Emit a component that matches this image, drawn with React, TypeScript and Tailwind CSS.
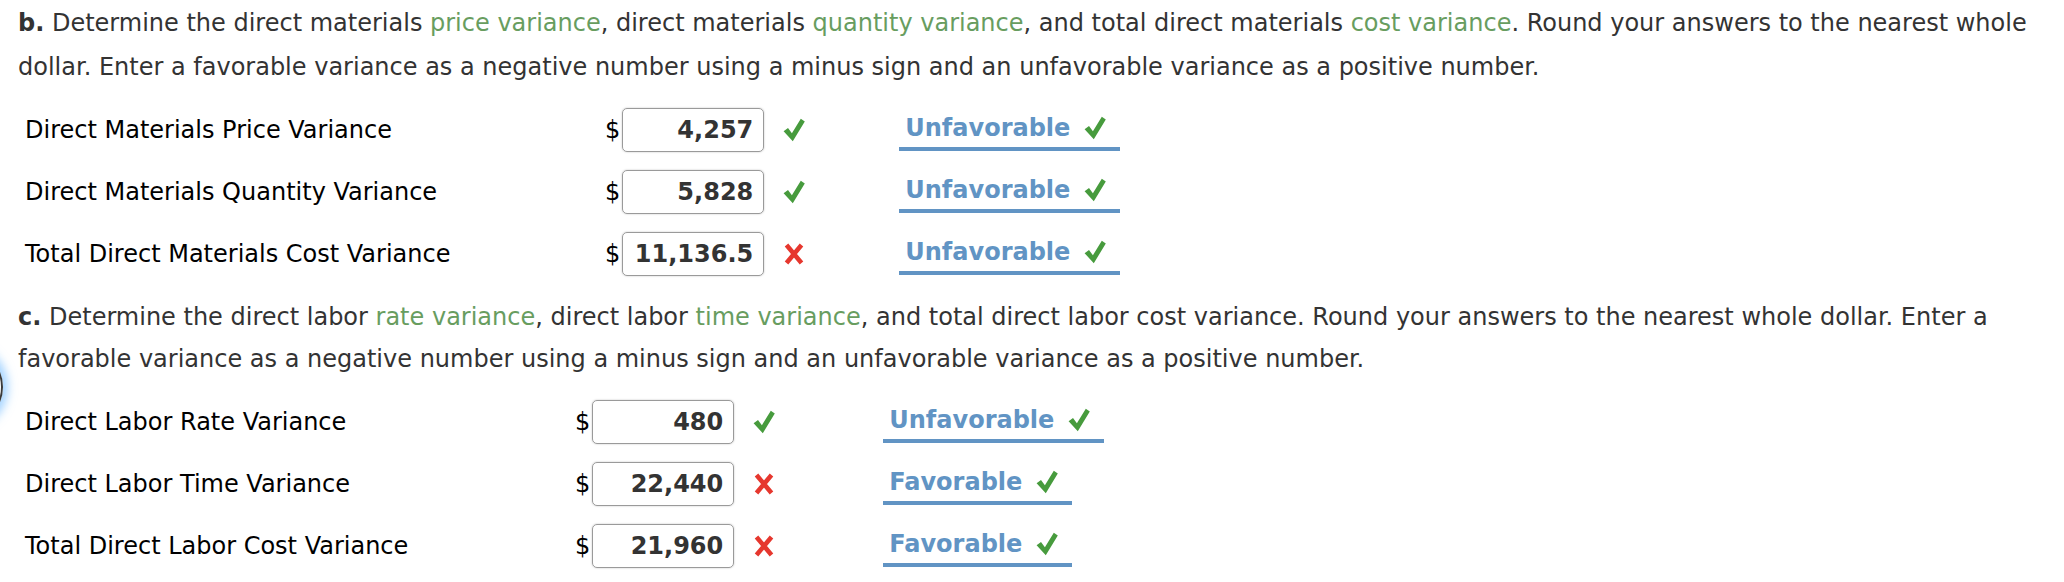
type Mark = "ok" | "bad";

interface RowProps {
  label: string;
  value: string;
  mark: Mark;
  choice: string;
  labelW: string;
  gapW: string;
}

function Check() {
  return (
    <svg width="22" height="24" viewBox="0 0 22 24" className="shrink-0">
      <path d="M0.6 13.2 L5 9.9 L8.9 15.2 L17.8 0.8 L21.8 3.6 L9.8 23.2 Z" fill="#479b3d" />
    </svg>
  );
}

function Cross() {
  return (
    <svg width="20" height="22" viewBox="0 0 20 22" className="shrink-0">
      <path d="M2.5 2 L17.5 20 M17.5 2 L2.5 20" stroke="#e6372e" strokeWidth="4.6" strokeLinecap="butt" />
    </svg>
  );
}

function Row({ label, value, mark, choice, labelW, gapW }: RowProps) {
  return (
    <div className="flex h-[62px] items-center pl-[25px]">
      <div className={`${labelW} shrink-0 text-black`}>{label}</div>
      <span className="text-black">$</span>
      <div className="ml-[2px] flex h-[44px] w-[142px] items-center justify-end rounded-[5px] border border-[#9a9a9a] pr-[10px] font-bold text-[#333] shadow-[0_0_2px_rgba(0,0,0,0.25)]">
        {value}
      </div>
      <div className="ml-[19px] flex w-[22px] justify-center">
        {mark === "ok" ? <Check /> : <Cross />}
      </div>
      <div
        className={`${gapW} inline-flex items-center border-b-4 border-[#6194c4] pb-[1px] pl-[6px] pr-[14px] font-bold text-[#6194c4]`}
      >
        <span>{choice}</span>
        <span className="ml-[14px]">
          <Check />
        </span>
      </div>
    </div>
  );
}

const green = "text-[#689d5f]";

export default function App() {
  return (
    <div className="relative h-[582px] w-[2064px] overflow-hidden bg-white font-['DejaVu_Sans',sans-serif] text-[24px] text-[#333]">
      {/* edge of a focused round button off to the left */}
      <div className="absolute left-[-75px] top-[348px] h-[78px] w-[78px] rounded-full border-2 border-[#3a3a3a] shadow-[0_0_10px_5px_rgba(90,175,255,0.55)]" />

      <p className="pl-[18px] pt-[1px] leading-[44px]">
        <b>b.</b> Determine the direct materials <span className={green}>price variance</span>, direct materials{" "}
        <span className={green}>quantity variance</span>, and total direct materials{" "}
        <span className={green}>cost variance</span>. Round your answers to the nearest whole
        <br />
        dollar. Enter a favorable variance as a negative number using a minus sign and an unfavorable variance as a
        positive number.
      </p>

      <div className="mt-[10px]">
        <Row label="Direct Materials Price Variance" value="4,257" mark="ok" choice="Unfavorable" labelW="w-[580px]" gapW="ml-[94px]" />
        <Row label="Direct Materials Quantity Variance" value="5,828" mark="ok" choice="Unfavorable" labelW="w-[580px]" gapW="ml-[94px]" />
        <Row label="Total Direct Materials Cost Variance" value="11,136.5" mark="bad" choice="Unfavorable" labelW="w-[580px]" gapW="ml-[94px]" />
      </div>

      <p className="mt-[11px] pl-[18px] leading-[42px]">
        <b>c.</b> Determine the direct labor <span className={green}>rate variance</span>, direct labor{" "}
        <span className={green}>time variance</span>, and total direct labor cost variance. Round your answers to the
        nearest whole dollar. Enter a
        <br />
        favorable variance as a negative number using a minus sign and an unfavorable variance as a positive number.
      </p>

      <div className="mt-[11px]">
        <Row label="Direct Labor Rate Variance" value="480" mark="ok" choice="Unfavorable" labelW="w-[550px]" gapW="ml-[108px]" />
        <Row label="Direct Labor Time Variance" value="22,440" mark="bad" choice="Favorable" labelW="w-[550px]" gapW="ml-[108px]" />
        <Row label="Total Direct Labor Cost Variance" value="21,960" mark="bad" choice="Favorable" labelW="w-[550px]" gapW="ml-[108px]" />
      </div>
    </div>
  );
}
